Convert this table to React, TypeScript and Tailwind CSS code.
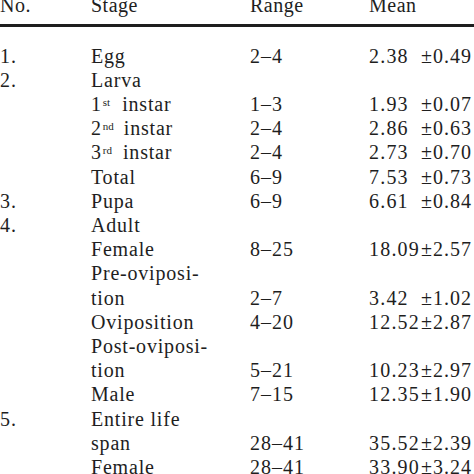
const rows: { no?: string; stage: React.ReactNode; range?: string; mean?: string; sd?: string }[] = [
  { no: "1.", stage: "Egg", range: "2–4", mean: "2.38", sd: "±0.49" },
  { no: "2.", stage: "Larva" },
  { stage: <Instar n="1" sup="st" gap="ml-[12px]" />, range: "1–3", mean: "1.93", sd: "±0.07" },
  { stage: <Instar n="2" sup="nd" gap="ml-[10px]" />, range: "2–4", mean: "2.86", sd: "±0.63" },
  { stage: <Instar n="3" sup="rd" gap="ml-[11px]" />, range: "2–4", mean: "2.73", sd: "±0.70" },
  { stage: "Total", range: "6–9", mean: "7.53", sd: "±0.73" },
  { no: "3.", stage: "Pupa", range: "6–9", mean: "6.61", sd: "±0.84" },
  { no: "4.", stage: "Adult" },
  { stage: "Female", range: "8–25", mean: "18.09", sd: "±2.57" },
  { stage: "Pre-oviposi-" },
  { stage: "tion", range: "2–7", mean: "3.42", sd: "±1.02" },
  { stage: "Oviposition", range: "4–20", mean: "12.52", sd: "±2.87" },
  { stage: "Post-oviposi-" },
  { stage: "tion", range: "5–21", mean: "10.23", sd: "±2.97" },
  { stage: "Male", range: "7–15", mean: "12.35", sd: "±1.90" },
  { no: "5.", stage: "Entire life" },
  { stage: "span", range: "28–41", mean: "35.52", sd: "±2.39" },
  { stage: "Female", range: "28–41", mean: "33.90", sd: "±3.24" },
];

function Instar({ n, sup, gap }: { n: string; sup: string; gap: string }) {
  return (
    <span>
      {n}
      <sup className="text-[11px] tracking-normal relative -top-[5px] ml-[1px]">{sup}</sup>
      <span className={gap}>instar</span>
    </span>
  );
}

export default function App() {
  return (
    <div
      className="w-[474px] h-[474px] overflow-hidden bg-white text-[#1e1e1e] text-[20px] leading-[24.2px] tracking-[1px] whitespace-nowrap"
      style={{ fontFamily: '"Liberation Serif", "Times New Roman", serif' }}
    >
      {/* header */}
      <div className="grid grid-cols-[91px_159px_119px_1fr] -mt-[7px] tracking-[0.5px]">
        <span>No.</span>
        <span>Stage</span>
        <span>Range</span>
        <span>Mean</span>
      </div>
      <div className="mt-[7px] h-[2.5px] bg-[#1e1e1e]" />

      {/* body */}
      <div className="mt-[17px]">
        {rows.map((r, i) => (
          <div key={i} className="grid grid-cols-[91px_159px_119px_1fr] h-[24.2px]">
            <span>{r.no}</span>
            <span className="tracking-[0.8px]">{r.stage}</span>
            <span>{r.range}</span>
            <span className="flex tracking-[1.2px]">
              <span className="w-[52px]">{r.mean}</span>
              <span className="tracking-[1px]">{r.sd}</span>
            </span>
          </div>
        ))}
      </div>
    </div>
  );
}
